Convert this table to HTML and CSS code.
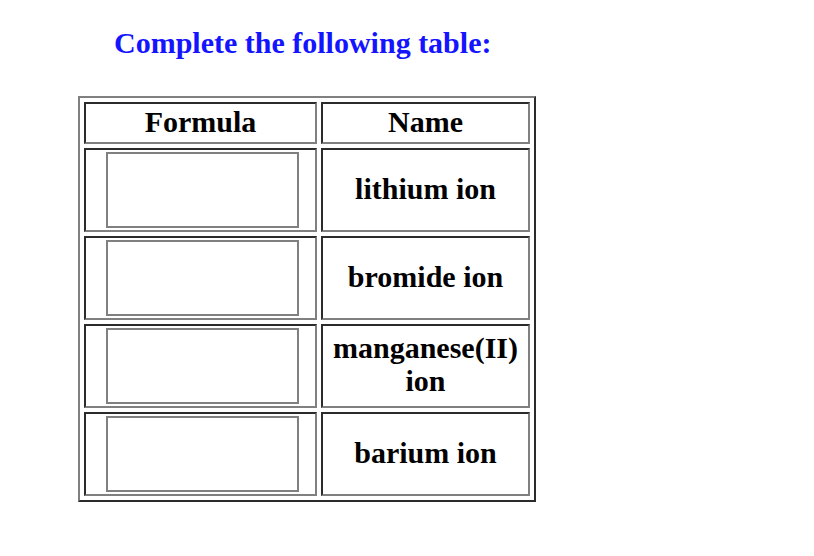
FILE: index.html
```html
<!DOCTYPE html>
<html>
<head>
<meta charset="utf-8">
<title>Complete the following table</title>
<link rel="stylesheet" href="styles.css">
</head>
<body>
<div class="page">
  <h1 class="title">Complete the following table:</h1>
  <table class="ions">
    <colgroup>
      <col class="col-formula">
      <col class="col-name">
    </colgroup>
    <thead>
      <tr>
        <th>Formula</th>
        <th>Name</th>
      </tr>
    </thead>
    <tbody>
      <tr>
        <td class="answer"><input class="box" type="text" aria-label="Formula for lithium ion"></td>
        <td class="name">lithium ion</td>
      </tr>
      <tr>
        <td class="answer"><input class="box" type="text" aria-label="Formula for bromide ion"></td>
        <td class="name">bromide ion</td>
      </tr>
      <tr>
        <td class="answer"><input class="box" type="text" aria-label="Formula for manganese(II) ion"></td>
        <td class="name">manganese(II) ion</td>
      </tr>
      <tr>
        <td class="answer"><input class="box" type="text" aria-label="Formula for barium ion"></td>
        <td class="name">barium ion</td>
      </tr>
    </tbody>
  </table>
</div>
</body>
</html>
```

FILE: styles.css
```css
html, body {
  margin: 0;
  padding: 0;
  background: #ffffff;
}

.page {
  padding: 26px 0 0 78px;
  font-family: "Liberation Serif", "Times New Roman", serif;
  color: #000000;
}

.title {
  margin: 0 0 36px 36px;
  font-size: 30px;
  line-height: 34px;
  font-weight: bold;
  color: #1414ff;
}

.ions {
  border-collapse: separate;
  border-spacing: 4px;
  table-layout: fixed;
  width: 458px;
  border-style: solid;
  border-width: 2px;
  border-color: #808080 #2b2b2b #2b2b2b #808080;
}

.col-formula { width: 233px; }
.col-name { width: 209px; }

.ions th,
.ions td {
  border-style: solid;
  border-width: 2px;
  border-color: #2b2b2b #808080 #808080 #2b2b2b;
  font-size: 30px;
  line-height: 33px;
  font-weight: bold;
  text-align: center;
  vertical-align: middle;
  padding: 0;
}

.ions th {
  height: 34px;
  padding-bottom: 4px;
}

.ions td.name {
  height: 76px;
  padding-bottom: 4px;
}

.ions td.answer {
  height: 80px;
  padding-left: 20px;
  text-align: left;
}

.box {
  display: block;
  box-sizing: border-box;
  width: 193px;
  height: 76px;
  margin: 0;
  padding: 0;
  border: 2px solid #808080;
  background: #ffffff;
  outline: none;
}
```
